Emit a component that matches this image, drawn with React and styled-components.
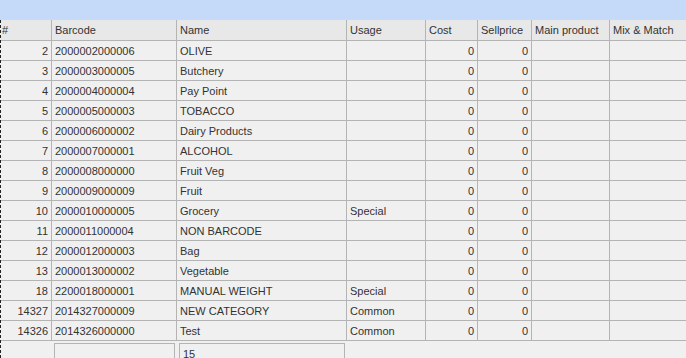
import React from "react";
import styled, { createGlobalStyle } from "styled-components";

const Global = createGlobalStyle`
  html, body { margin: 0; padding: 0; background: #f0f0f0; overflow: hidden; }
  body { font-family: "Liberation Sans", Arial, sans-serif; font-size: 11px; color: #333; }
`;

const cols = "51px 125px 170px 79px 52px 54px 78px 120px";

const Page = styled.div`
  width: 686px;
  height: 358px;
  overflow: hidden;
  display: flex;
  flex-direction: column;
  background: #f0f0f0;
`;

const TopBar = styled.div`
  height: 20px;
  flex: none;
  background: #c4daf8;
`;

const Grid = styled.div`
  display: flex;
  flex-direction: column;
  border-left: 1px dashed #222;
  width: 760px;
`;

const Row = styled.div`
  display: grid;
  grid-template-columns: ${cols};
  height: ${(p) => (p.$header ? 21 : 20)}px;
  background: ${(p) => (p.$header ? "#e8e8e8" : "#f0f0f0")};
`;

const Cell = styled.div`
  box-sizing: border-box;
  border-right: 1px solid #b4b4b4;
  border-bottom: 1px solid #b4b4b4;
  padding: 2px 3px 0;
  line-height: 17px;
  white-space: nowrap;
  overflow: hidden;
  text-align: ${(p) => (p.$right ? "right" : "left")};
  padding-left: ${(p) => (p.$first ? "1px" : "3px")};
`;

const Footer = styled.div`
  display: flex;
  padding: 2px 0 0 53px;
  gap: 4px;
  height: 20px;
`;

const Field = styled.div`
  box-sizing: border-box;
  width: ${(p) => p.$w}px;
  height: 22px;
  border: 1px solid #b4b4b4;
  padding: 2px 3px 0;
  line-height: 17px;
  color: #333;
`;

const headers = ["#", "Barcode", "Name", "Usage", "Cost", "Sellprice", "Main product", "Mix & Match"];

const rows = [
  [2, "2000002000006", "OLIVE", ""],
  [3, "2000003000005", "Butchery", ""],
  [4, "2000004000004", "Pay Point", ""],
  [5, "2000005000003", "TOBACCO", ""],
  [6, "2000006000002", "Dairy Products", ""],
  [7, "2000007000001", "ALCOHOL", ""],
  [8, "2000008000000", "Fruit Veg", ""],
  [9, "2000009000009", "Fruit", ""],
  [10, "2000010000005", "Grocery", "Special"],
  [11, "2000011000004", "NON BARCODE", ""],
  [12, "2000012000003", "Bag", ""],
  [13, "2000013000002", "Vegetable", ""],
  [18, "2200018000001", "MANUAL WEIGHT", "Special"],
  [14327, "2014327000009", "NEW CATEGORY", "Common"],
  [14326, "2014326000000", "Test", "Common"],
];

export default function App() {
  return (
    <Page>
      <Global />
      <TopBar />
      <Grid>
        <Row $header>
          {headers.map((h, i) => (
            <Cell key={h} $first={i === 0}>{h}</Cell>
          ))}
        </Row>
        {rows.map((r) => (
          <Row key={r[0]}>
            <Cell $right>{r[0]}</Cell>
            <Cell>{r[1]}</Cell>
            <Cell>{r[2]}</Cell>
            <Cell>{r[3]}</Cell>
            <Cell $right>0</Cell>
            <Cell $right>0</Cell>
            <Cell />
            <Cell />
          </Row>
        ))}
        <Footer>
          <Field $w={121} />
          <Field $w={166}>15</Field>
        </Footer>
      </Grid>
    </Page>
  );
}
